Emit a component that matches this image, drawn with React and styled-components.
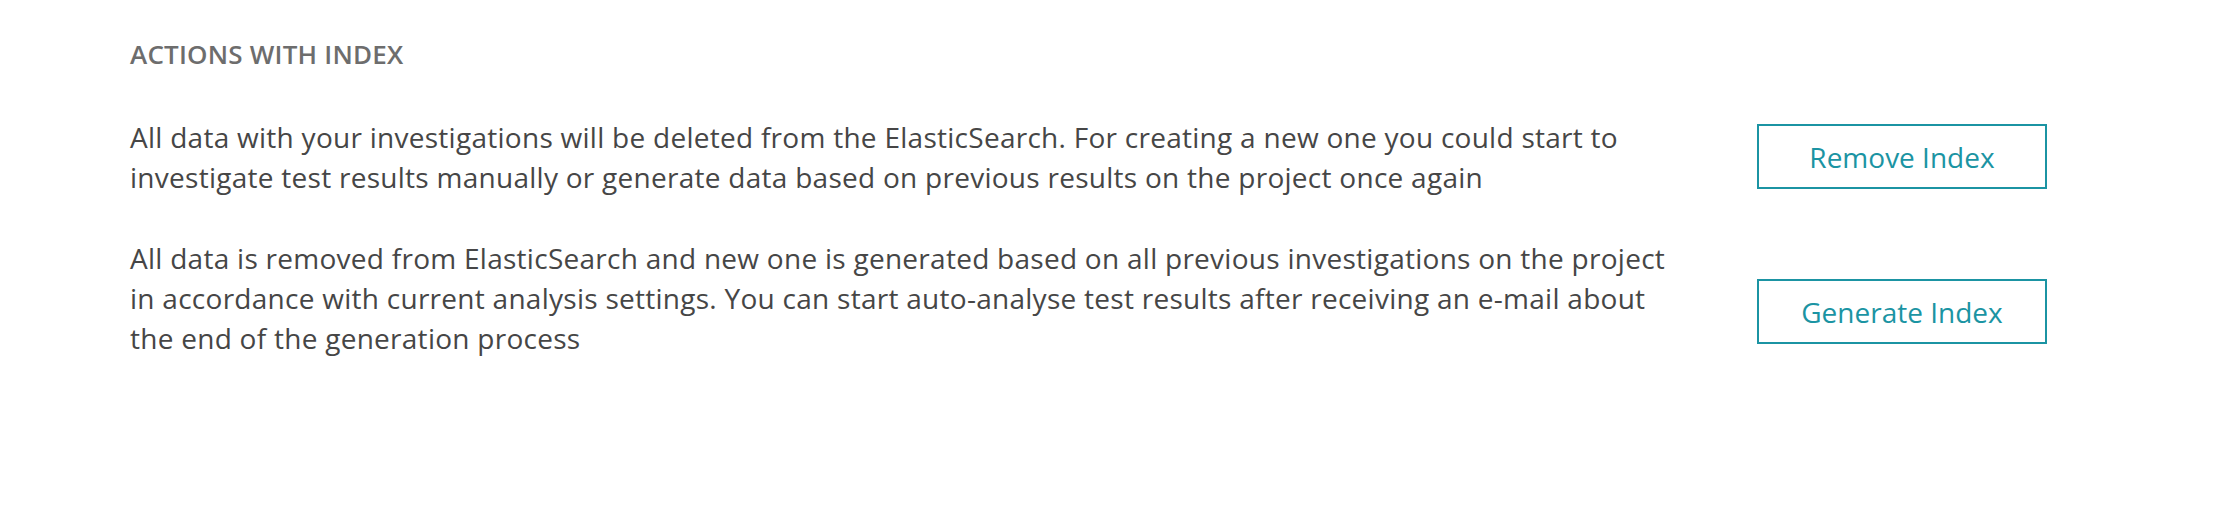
import React from 'react';
import styled, { createGlobalStyle } from 'styled-components';

const GlobalStyle = createGlobalStyle`
  * {
    margin: 0;
    padding: 0;
    box-sizing: border-box;
  }

  body {
    margin: 0;
    background: #ffffff;
    font-family: 'Open Sans', 'Noto Sans', sans-serif;
  }
`;

const Section = styled.section`
  padding: 36px 187px 0 130px;
  min-height: 510px;
`;

const SectionTitle = styled.h3`
  font-size: 26px;
  font-weight: 600;
  line-height: 36px;
  letter-spacing: 0.2px;
  color: #6d6d6d;
  text-transform: uppercase;
  margin-bottom: 45px;
`;

const ActionList = styled.div`
  display: flex;
  flex-direction: column;
  gap: 41px;
`;

const ActionRow = styled.div`
  display: flex;
  align-items: flex-start;
  gap: 82px;
`;

const Description = styled.p`
  width: 1545px;
  flex-shrink: 0;
  font-size: 28px;
  line-height: 40px;
  letter-spacing: 0.27px;
  color: #464646;
`;

const ActionButton = styled.button`
  width: 290px;
  height: 65px;
  margin-top: ${props => props.$offset}px;
  flex-shrink: 0;
  background: #ffffff;
  border: 2px solid #1b94a3;
  color: #1b94a3;
  font-family: 'Open Sans', 'Noto Sans', sans-serif;
  font-size: 28px;
  cursor: pointer;

  &:hover {
    background: #1b94a3;
    color: #ffffff;
  }
`;

function App() {
  return (
    <>
      <GlobalStyle />
      <Section>
        <SectionTitle>Actions with index</SectionTitle>
        <ActionList>
          <ActionRow>
            <Description>
              All data with your investigations will be deleted from the ElasticSearch. For creating a new one you could start to
              investigate test results manually or generate data based on previous results on the project once again
            </Description>
            <ActionButton $offset={7}>Remove Index</ActionButton>
          </ActionRow>
          <ActionRow>
            <Description>
              All data is removed from ElasticSearch and new one is generated based on all previous investigations on the project
              in accordance with current analysis settings. You can start auto-analyse test results after receiving an e-mail about
              the end of the generation process
            </Description>
            <ActionButton $offset={41}>Generate Index</ActionButton>
          </ActionRow>
        </ActionList>
      </Section>
    </>
  );
}

export default App;
